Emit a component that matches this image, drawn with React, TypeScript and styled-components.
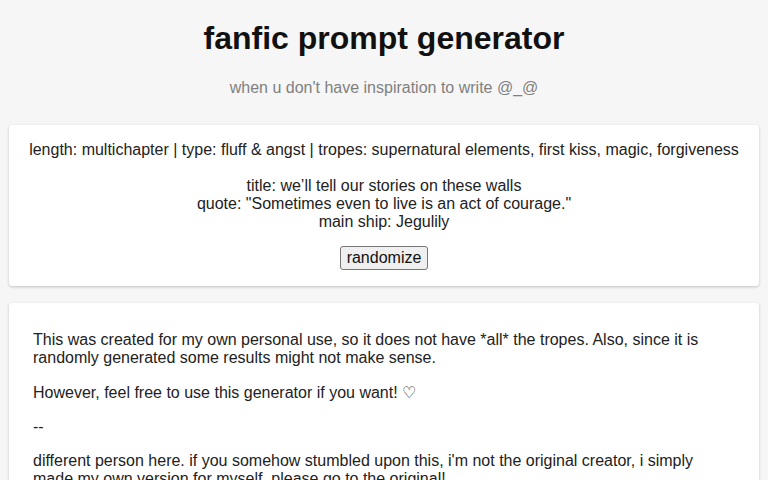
import React, { FC } from 'react';
import styled, { createGlobalStyle } from 'styled-components';

const GlobalStyle = createGlobalStyle`
  html, body {
    margin: 0;
    padding: 0;
    background: #f6f6f6;
    font-family: "Liberation Sans", Arial, sans-serif;
    color: #222;
  }
`;

const Page = styled.div`
  padding: 0 9px 20px;
  display: flex;
  flex-direction: column;
`;

const Header = styled.header`
  text-align: center;
  padding-top: 20px;
`;

const Title = styled.h1`
  margin: 0;
  font-size: 32px;
  font-weight: bold;
  color: #111;
  line-height: 37px;
`;

const Subtitle = styled.p`
  margin: 22px 0 0;
  font-size: 16px;
  color: #808080;
`;

const Card = styled.section<{ $center?: boolean }>`
  background: #fff;
  border-radius: 3px;
  box-shadow: 0 1px 3px rgba(0, 0, 0, 0.22);
  text-align: ${(p) => (p.$center ? 'center' : 'left')};
  font-size: 16px;
  color: #222;
`;

const PromptCard = styled(Card)`
  margin-top: 28px;
  padding: 16px 20px 16px;
`;

const AboutCard = styled(Card)`
  margin-top: 17px;
  padding: 12px 24px 10px;
`;

const Line = styled.div``;

const Details = styled.div`
  margin-top: 18px;
`;

const RandomButton = styled.button`
  margin-top: 15px;
  font-family: "Liberation Sans", Arial, sans-serif;
  font-size: 16px;
  color: #111;
  background: #efefef;
  border: 1px solid #767676;
  border-radius: 3px;
  padding: 2px 6px;
  box-sizing: border-box;
  height: 24px;
  cursor: pointer;
`;

const Para = styled.p`
  margin: 16px 0;
`;

const prompt = {
  length: 'multichapter',
  type: 'fluff & angst',
  tropes: ['supernatural elements', 'first kiss', 'magic', 'forgiveness'],
  title: 'we\u2019ll tell our stories on these walls',
  quote: '"Sometimes even to live is an act of courage."',
  ship: 'Jegulily',
};

const App: FC = () => {
  return (
    <>
      <GlobalStyle />
      <Page>
        <Header>
          <Title>fanfic prompt generator</Title>
          <Subtitle>when u don't have inspiration to write @_@</Subtitle>
        </Header>

        <PromptCard $center>
          <Line>
            length: {prompt.length} | type: {prompt.type} | tropes: {prompt.tropes.join(', ')}
          </Line>
          <Details>
            <Line>title: {prompt.title}</Line>
            <Line>quote: {prompt.quote}</Line>
            <Line>main ship: {prompt.ship}</Line>
          </Details>
          <RandomButton>randomize</RandomButton>
        </PromptCard>

        <AboutCard>
          <Para>
            This was created for my own personal use, so it does not have *all* the tropes. Also, since it is
            randomly generated some results might not make sense.
          </Para>
          <Para>However, feel free to use this generator if you want! {'\u2661'}</Para>
          <Para>--</Para>
          <Para>
            different person here. if you somehow stumbled upon this, i'm not the original creator, i simply
            made my own version for myself. please go to the original!
          </Para>
        </AboutCard>
      </Page>
    </>
  );
};

export default App;
